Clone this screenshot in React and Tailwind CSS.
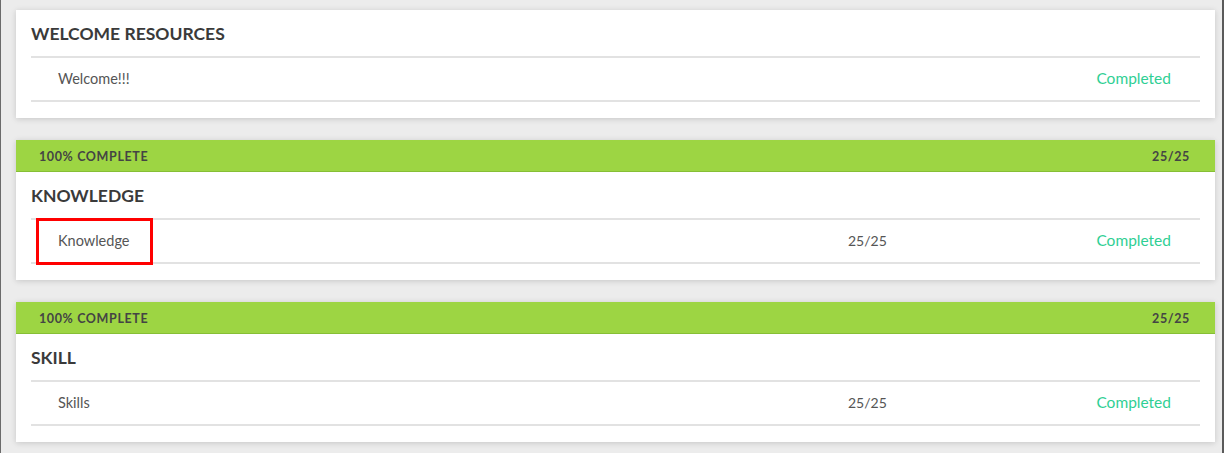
import React from "react"

const sections = [
  {
    title: "WELCOME RESOURCES",
    bar: null,
    rows: [{ name: "Welcome!!!", score: "", status: "Completed" }],
  },
  {
    title: "KNOWLEDGE",
    bar: { label: "100% COMPLETE", score: "25/25" },
    rows: [{ name: "Knowledge", score: "25/25", status: "Completed", marked: true }],
  },
  {
    title: "SKILL",
    bar: { label: "100% COMPLETE", score: "25/25" },
    rows: [{ name: "Skills", score: "25/25", status: "Completed" }],
  },
]

function Section({ section }) {
  return (
    <div className="bg-white shadow-[0_1px_6px_rgba(0,0,0,0.16)]">
      {section.bar && (
        <div className="flex items-center justify-between h-[32px] pt-[3px] pl-[23px] pr-[25px] bg-[#9dd543] border-b border-[#86bf35] text-[12.5px] font-bold tracking-[0.05em] text-[#444]">
          <span>{section.bar.label}</span>
          <span>{section.bar.score}</span>
        </div>
      )}
      <div className="px-[15px] pb-[16px]">
        <div className="h-[46px] flex items-center pt-[3px] text-[17.5px] font-bold text-[#3a3a3a]">
          {section.title}
        </div>
        {section.rows.map((row) => (
          <div key={row.name} className="relative border-t-2 border-b-2 border-[#e2e2e2] h-[46px] flex items-center pl-[27px] pr-[29px] text-[14.5px] text-[#555]">
            <span className="w-[790px]">{row.name}</span>
            <span className="flex-1 text-[14px] -mt-[1px]">{row.score}</span>
            <span className="text-[15.5px] text-[#2fcf94]">{row.status}</span>
            {row.marked && (
              <div className="absolute left-[5px] top-[-2px] w-[117px] h-[47px] border-[3px] border-[#f00]" />
            )}
          </div>
        ))}
      </div>
    </div>
  )
}

export default function App() {
  return (
    <div className="min-h-[453px] bg-[#ececec] border-l border-[#6b6b6b] border-r-2 border-r-[#5a5a5a] pt-[10px] pb-[9px] pl-[15px] pr-[7px] font-['Lato','Open_Sans',sans-serif]">
      <div className="flex flex-col gap-[22px]">
        {sections.map((s) => (
          <Section key={s.title} section={s} />
        ))}
      </div>
    </div>
  )
}
